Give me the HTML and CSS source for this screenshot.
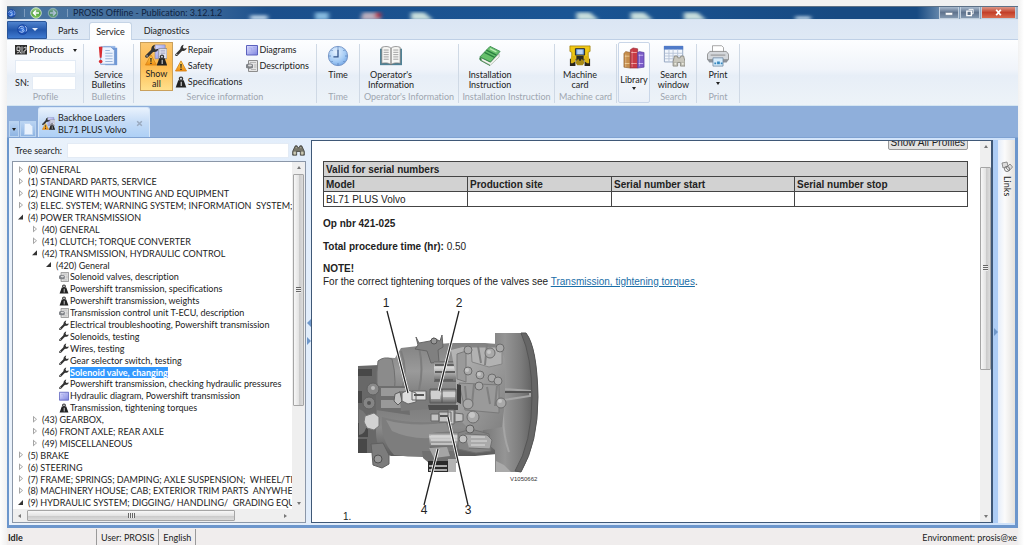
FILE: index.html
```html
<!DOCTYPE html>
<html lang="en">
<head>
<meta charset="utf-8">
<title>PROSIS Offline - Publication: 3.12.1.2</title>
<link rel="stylesheet" href="styles.css">
</head>
<body>
<svg class="defs" aria-hidden="true">
  <defs>
    <linearGradient id="gold" x1="0" y1="0" x2="0" y2="1"><stop offset="0" stop-color="#ffe35a"/><stop offset="1" stop-color="#f08a10"/></linearGradient>
    <linearGradient id="lilac" x1="0" y1="0" x2="1" y2="1"><stop offset="0" stop-color="#dfe0ff"/><stop offset="1" stop-color="#7d84e0"/></linearGradient>
    <linearGradient id="greenball" x1="0" y1="0" x2="0" y2="1"><stop offset="0" stop-color="#b5dca0"/><stop offset=".5" stop-color="#4d9c3c"/><stop offset="1" stop-color="#85cf5c"/></linearGradient>
    <radialGradient id="clockface" cx=".4" cy=".3" r=".8"><stop offset="0" stop-color="#e6f2ff"/><stop offset=".6" stop-color="#a4cbf5"/><stop offset="1" stop-color="#6ba0e2"/></radialGradient>
    <radialGradient id="orb"><stop offset="0" stop-color="#3e82ea"/><stop offset="1" stop-color="#123f9e"/></radialGradient>
  </defs>
  <symbol id="wrench" viewBox="0 0 12 12"><path d="M1.5 10.8 6.8 5.4" stroke="#333" stroke-width="2.6" stroke-linecap="round"/><path d="M6 6.6C4.7 4 6 1.2 8.7.7L7.8 3.2l1.2 1.5 2.7-.6C11.5 6.400 8.800 7.800 6 6.600Z" fill="#333"/><circle cx="1.8" cy="10.4" r=".6" fill="#eee"/></symbol>
  <symbol id="weight" viewBox="0 0 12 12"><path d="M3.300 4.300h5.400l2.600 7.200H.7Z" fill="#222"/><circle cx="6" cy="2.700" r="1.600" fill="none" stroke="#333" stroke-width="1.300"/><path d="M5.700 5.700h1v4.400h-1z" fill="#e8e8e8"/></symbol>
  <symbol id="warn" viewBox="0 0 12 12"><path d="M6 .9 11.500 11H.5Z" fill="url(#gold)" stroke="#d8871c" stroke-width=".9" stroke-linejoin="round"/><path d="M5.300 4h1.400L6.400 8h-.8zM5.300 8.800h1.400v1.300H5.300z" fill="#222"/></symbol>
  <symbol id="diagram" viewBox="0 0 12 12"><path d="M.5 1.500h11v9.500H.5z" fill="url(#lilac)" stroke="#5b61bd"/><path d="M2.500 4h3v3h4M7 3.500h2.500M3 9h3" stroke="#a5a9ea" stroke-width=".8" fill="none"/></symbol>
  <symbol id="descr" viewBox="0 0 12 12"><path d="M2.500.5h9v11h-9z" fill="#e4e4e4" stroke="#8d8d8d"/><path d="M4 2.500h6M8 5h2.500M8 7h2.500M5 9.500h5" stroke="#aaa" stroke-width=".8"/><path d="M0 5c0-1 2-1.500 3.500-1.500S7 4 7 5v2.500C7 9 0 9 0 7.500Z" fill="#808388"/><ellipse cx="4" cy="5.500" rx="2" ry="1" fill="#dcdcdc"/></symbol>
  <symbol id="binoc" viewBox="0 0 14 12"><path d="M3.500 1h2l.8 2h1.400l.8-2h2l2.800 6v4H9V7H5v4H.7V7Z" fill="#77766a" stroke="#35352f" stroke-width=".8"/><path d="M2 7.500h2V10H2zm8 0h2V10h-2zM4 3h1.500M8.500 3H10" fill="#c7c3ac" stroke="#d8d5c2" stroke-width=".6"/></symbol>
  <symbol id="gear-orb" viewBox="0 0 12 12"><circle cx="6" cy="6" r="5.700" fill="url(#orb)"/><path d="M2 5a3 3 0 0 1 5.500-1.200M2.500 7.500A3 3 0 0 0 8 7M8.500 2.200a4 4 0 0 1 1.300 6M4 5.500a1.500 1.500 0 1 1 1.300 2" fill="none" stroke="#c3d9ff" stroke-width=".9"/></symbol>
  <symbol id="showall" viewBox="0 0 24 24"><path d="M11 1h11v15H11z" fill="url(#lilac)" stroke="#7d82b0" stroke-width=".7"/><path d="M15 5h9v11h-9z" fill="#dfe1ee" stroke="#777" stroke-width=".7"/><path d="M17 7.500h5M17 10h5" stroke="#9a9aba"/><use href="#wrench" x="0" y="0" width="15" height="15"/><use href="#warn" x="0" y="11" width="13" height="13"/><use href="#weight" x="12" y="11" width="13" height="13"/></symbol>
</svg>

<header class="titlebar">
  <svg class="title-orb" viewBox="0 0 12 12"><use href="#gear-orb"/></svg>
  <span class="title-sep"></span>
  <svg class="nav-ball" viewBox="0 0 14 14"><circle cx="7" cy="7" r="6.200" fill="url(#greenball)" stroke="#d6e6d2"/><path d="M10.500 7H4.500M7 4 4 7l3 3" stroke="#fff" stroke-width="1.800" fill="none"/></svg>
  <svg class="nav-ball dim" viewBox="0 0 14 14"><circle cx="7" cy="7" r="5.500" fill="url(#greenball)" stroke="#d6e6d2"/><path d="M3.500 7h6M7 4l3 3-3 3" stroke="#fff" stroke-width="1.800" fill="none"/></svg>
  <span class="title-sep"></span>
  <span class="title-text">PROSIS Offline - Publication: 3.12.1.2</span>
  <svg class="glow" viewBox="0 0 730 13" preserveAspectRatio="none" aria-hidden="true">
    <defs><filter id="soft"><feGaussianBlur stdDeviation="2"/></filter></defs>
    <g filter="url(#soft)">
      <path d="M24 9h18v5H24zM587 10h16v4h-16z" fill="#b5cde2"/><path d="M91 6h14v8H91z" fill="#85b9de"/><path d="M140 6h17l2 8h-21z" fill="#b9aebd"/><path d="M153 6h6v6h-6z" fill="#b2354a"/>
      <path d="M190 6h14l9 8h-23zM361 6h14l9 8h-23zM417 6h14l9 8h-23zM472 6h14l9 8h-23z" fill="#c6dddc"/>
    </g>
  </svg>
  <div class="winbtns">
    <button class="wb" aria-label="Minimize"><svg viewBox="0 0 20 12"><path d="M6 6h8v3H6z" fill="#fff" stroke="#5a6b80" stroke-width=".5"/></svg></button>
    <button class="wb" aria-label="Restore"><svg viewBox="0 0 20 12"><path d="M8.500 2.500h5v5h-2" fill="none" stroke="#fff" stroke-width="1"/><path d="M6.500 4.500h5v5h-5z" fill="#5b6f86" stroke="#fff" stroke-width="1.500"/></svg></button>
    <button class="wb close" aria-label="Close"><svg viewBox="0 0 34 12"><path d="m14.500 3 5 6m0-6-5 6" stroke="#fff" stroke-width="2"/></svg></button>
  </div>
</header>

<nav class="tabs">
  <button class="app-btn" aria-label="Application menu"><svg class="app-orb" viewBox="0 0 12 12"><use href="#gear-orb"/></svg><span class="caret light"></span></button>
  <button class="rtab parts">Parts</button>
  <button class="rtab active">Service</button>
  <button class="rtab diag">Diagnostics</button>
</nav>

<section class="ribbon">
  <div class="group g-profile">
    <div class="body col">
      <button class="small-btn products"><svg class="ic12" viewBox="0 0 12 12"><path d="M0 1h12v9.500H0z" fill="#2d2d2d"/><path d="M2 3h3v3.500H2zm0 6 3-1.500 1 2M7 2.500v7M8.500 4 11 3v3l-2 1v2.500" fill="none" stroke="#ddd" stroke-width=".9"/></svg>Products<span class="caret"></span></button>
      <input class="field" aria-label="Product">
      <div class="sn"><label for="sn">SN:</label><input id="sn" class="field"></div>
    </div>
    <div class="caption">Profile</div>
  </div>
  <div class="group g-bulletins">
    <div class="body">
      <button class="big-btn"><svg class="ic" viewBox="0 0 24 24"><path d="M7 1h13v19H7z" fill="#9dbbe8"/><path d="M9 3h13v19H9z" fill="#6f98d6"/><path d="M4 2h11l4 4v15H4z" fill="#edf4ff" stroke="#7a9dd0"/><path d="M9 6h5M9 9h8M9 12h8M9 15h8M9 18h8" stroke="#93afd5"/><path d="M2 2h4L5 14H3z" fill="#d92c31"/><circle cx="4" cy="18" r="2" fill="#d92c31"/></svg>Service<br>Bulletins</button>
    </div>
    <div class="caption">Bulletins</div>
  </div>
  <div class="group g-info">
    <div class="body info">
      <button class="big-btn pressed"><svg class="ic" viewBox="0 0 24 24"><use href="#showall"/></svg>Show<br>all</button>
      <div class="stack">
        <button class="small-btn"><svg class="ic12"><use href="#wrench"/></svg>Repair</button>
        <button class="small-btn"><svg class="ic12"><use href="#warn"/></svg>Safety</button>
        <button class="small-btn"><svg class="ic12"><use href="#weight"/></svg>Specifications</button>
      </div>
      <div class="stack">
        <button class="small-btn"><svg class="ic12"><use href="#diagram"/></svg>Diagrams</button>
        <button class="small-btn"><svg class="ic12"><use href="#descr"/></svg>Descriptions</button>
      </div>
    </div>
    <div class="caption">Service information</div>
  </div>
  <div class="group g-time">
    <div class="body">
      <button class="big-btn"><svg class="ic" viewBox="0 0 24 24"><circle cx="12" cy="12" r="10.500" fill="url(#clockface)" stroke="#6d8fc4"/><path d="M12 5v8H7" fill="none" stroke="#33558c" stroke-width="1.400"/><path d="M12 2.500v1.500M12 20v1.500M2.500 12H4M20 12h1.500M5 5.500l1 1M18 17.500l1 1M5 18.500l1-1M18 6.500l1-1" stroke="#4d74ad"/></svg>Time</button>
    </div>
    <div class="caption">Time</div>
  </div>
  <div class="group g-operator">
    <div class="body start">
      <button class="big-btn"><svg class="ic" viewBox="0 0 24 24"><path d="M0 4h24v18H0z" fill="#4f8296"/><path d="M2 2.500C6 1 10 1.500 12 3.500c2-2 6-2.500 10-1V20c-4-1-8-.5-10 1.500C10 19.500 6 19 2 20Z" fill="#f6f6f4" stroke="#777" stroke-width=".8"/><path d="M12 3.500v18" stroke="#555"/><path d="M4 5.500h5.500M4 8h5.500M4 10.500h5.500M4 13h5.500M4 15.500h5.500M14.500 5.500H20M14.500 8H20M14.500 10.500H20M14.500 13H20M14.500 15.500H20" stroke="#9a9a9a"/></svg>Operator's<br>Information</button>
    </div>
    <div class="caption">Operator's Information</div>
  </div>
  <div class="group g-install">
    <div class="body start">
      <button class="big-btn"><svg class="ic" viewBox="0 0 24 24"><path d="m1 13 11 5v5L2 17.500C0 16 0 14.500 1 13Z" fill="#2e7d3e"/><path d="m2.500 14 10 5L22 9.500v3.500l-9.500 9L3 17Z" fill="#f3f5ef" stroke="#8a9a88" stroke-width=".6"/><path d="M1 13 12 1.500 23 7l-10.500 11.500Z" fill="#67c06c" stroke="#36894a"/><path d="m8 5.500 11 5.500M6 8l11 5.500" stroke="#2b7f40" stroke-width="1.600"/><path d="M12 4l7 3.500" stroke="#b9ecb5" stroke-width="1.500"/></svg>Installation<br>Instruction</button>
    </div>
    <div class="caption">Installation Instruction</div>
  </div>
  <div class="group g-machine">
    <div class="body start">
      <button class="big-btn"><svg class="ic" viewBox="0 0 24 24"><path d="M1 1h22v6l-2 1v8H3V8L1 7Z" fill="#efc714" stroke="#9b7b0a" stroke-width=".8"/><path d="M7 4h10v7H7z" fill="#5f8fd0" stroke="#222"/><path d="M9 5h6v5H9z" fill="#b9d4f5"/><path d="M8 12h8v6H8z" fill="#2a2a22"/><path d="M1 15h6v8H1zm16 0h6v8h-6z" fill="#28251c"/><path d="M3 12h4v6l-3 2H2v-6zM17 12h4l1 2v6h-2l-3-2z" fill="#dcb414"/><path d="m7 19 3-4 2 3 2-3 3 4-2 3H9Z" fill="#a98c17"/></svg>Machine<br>card</button>
    </div>
    <div class="caption">Machine card</div>
  </div>
  <button class="big-btn library"><svg class="ic" viewBox="0 0 24 24"><path d="m1 7 2-2 5 1v17l-7-1Z" fill="#c68e4c" stroke="#885522" stroke-width=".6"/><path d="m8 3 3-2 5 1v21H8Z" fill="#c83a45" stroke="#861f2e" stroke-width=".6"/><path d="m16 6 2-1 5 1v16l-7 1Z" fill="#7c5cc8" stroke="#4a3392" stroke-width=".6"/><path d="M2 10h5M2 18h5" stroke="#eecb94"/><path d="M9 6h6M9 18h6" stroke="#f1a6a3"/><path d="M17 9h5M17 18h5" stroke="#cbbcf4"/><path d="M3 8v14M10 4v18M18 8v13" stroke="#fff" opacity=".3"/></svg>Library<span class="caret"></span></button>
  <div class="group g-search">
    <div class="body">
      <button class="big-btn"><svg class="ic" viewBox="0 0 24 24"><path d="M1.500 1.500h20v17h-20z" fill="#f2f6fc" stroke="#8ea1bd"/><path d="M1 1h21v4H1z" fill="#4f7ac8"/><path d="M2 9h19M2 12h19M2 15h19M6.500 5v13M11 5v13M16 5v13" stroke="#b7c4d8"/><path d="M12.500 12h3l.7 2h2.600l.7-2h3l1.500 6v5h-5v-4h-3v4h-5v-5Z" fill="#c9c7bd" stroke="#85847c" stroke-width=".9"/><path d="M12 19h3v3h-3zm8 0h3v3h-3z" fill="#eceadf" stroke="#a09f94" stroke-width=".6"/></svg>Search<br>window</button>
    </div>
    <div class="caption">Search</div>
  </div>
  <div class="group g-print">
    <div class="body">
      <button class="big-btn"><svg class="ic" viewBox="0 0 24 24"><path d="M6 .8h10l2 2V9H6z" fill="#fff" stroke="#888" stroke-width=".8"/><path d="M3 7h18l2.500 3v6H.5v-6Z" fill="#d4d7db" stroke="#777" stroke-width=".8"/><path d="M4 11h16" stroke="#888"/><path d="M.5 16h23l-2 3h-19Z" fill="#8d9299"/><path d="M6.500 14h11v9h-11z" fill="#d7ecfb" stroke="#66809a" stroke-width=".8"/><path d="M8 19h2v2H8zm3-1h3v3h-3zm4 1h2v2h-2z" fill="#3888bf"/></svg>Print<span class="caret"></span></button>
    </div>
    <div class="caption">Print</div>
  </div>
</section>

<div class="docbar">
  <button class="mini" aria-label="Tab list"><span class="caret"></span></button>
  <button class="mini wide" aria-label="New tab"><svg viewBox="0 0 14 14"><path d="M3.500 1.500h5l3 3v8h-8z" fill="#e9f2fd" stroke="#c3d8f2"/></svg></button>
  <div class="doctab">
    <svg class="tab-ic" viewBox="0 0 24 24"><use href="#showall"/></svg>
    <span class="tab-name">Backhoe Loaders<br>BL71 PLUS Volvo</span>
    <button class="tab-close" aria-label="Close tab"><svg viewBox="0 0 6 6"><path d="m1 1 4 4m0-4L1 5" stroke="#9aaabf" stroke-width="1.300"/></svg></button>
  </div>
</div>

<main class="work">
  <aside class="side">
    <div class="searchrow"><label for="ts">Tree search:</label><input id="ts" class="field"><button class="find" aria-label="Find"><svg viewBox="0 0 14 12"><use href="#binoc"/></svg></button></div>
    <div class="treebox">
      <ul class="tree">
        <li><button class="tw" aria-label="Expand"></button>(0) GENERAL</li>
        <li><button class="tw" aria-label="Expand"></button>(1) STANDARD PARTS, SERVICE</li>
        <li><button class="tw" aria-label="Expand"></button>(2) ENGINE WITH MOUNTING AND EQUIPMENT</li>
        <li><button class="tw" aria-label="Expand"></button>(3) ELEC. SYSTEM; WARNING SYSTEM; INFORMATION&nbsp; SYSTEM; INSTRUMENTS</li>
        <li><button class="tw open" aria-label="Collapse"></button>(4) POWER TRANSMISSION</li>
        <li class="l1"><button class="tw" aria-label="Expand"></button>(40) GENERAL</li>
        <li class="l1"><button class="tw" aria-label="Expand"></button>(41) CLUTCH; TORQUE CONVERTER</li>
        <li class="l1"><button class="tw open" aria-label="Collapse"></button>(42) TRANSMISSION, HYDRAULIC CONTROL</li>
        <li class="l2"><button class="tw open" aria-label="Collapse"></button>(420) General</li>
        <li class="l3"><svg><use href="#descr"/></svg><a href="#">Solenoid valves, description</a></li>
        <li class="l3"><svg><use href="#weight"/></svg><a href="#">Powershift transmission, specifications</a></li>
        <li class="l3"><svg><use href="#weight"/></svg><a href="#">Powershift transmission, weights</a></li>
        <li class="l3"><svg><use href="#descr"/></svg><a href="#">Transmission control unit T-ECU, description</a></li>
        <li class="l3"><svg><use href="#wrench"/></svg><a href="#">Electrical troubleshooting, Powershift transmission</a></li>
        <li class="l3"><svg><use href="#wrench"/></svg><a href="#">Solenoids, testing</a></li>
        <li class="l3"><svg><use href="#wrench"/></svg><a href="#">Wires, testing</a></li>
        <li class="l3"><svg><use href="#wrench"/></svg><a href="#">Gear selector switch, testing</a></li>
        <li class="l3"><svg><use href="#wrench"/></svg><a href="#" class="sel">Solenoid valve, changing</a></li>
        <li class="l3"><svg><use href="#wrench"/></svg><a href="#">Powershift transmission, checking hydraulic pressures</a></li>
        <li class="l3"><svg><use href="#diagram"/></svg><a href="#">Hydraulic diagram, Powershift transmission</a></li>
        <li class="l3"><svg><use href="#weight"/></svg><a href="#">Transmission, tightening torques</a></li>
        <li class="l1"><button class="tw" aria-label="Expand"></button>(43) GEARBOX,</li>
        <li class="l1"><button class="tw" aria-label="Expand"></button>(46) FRONT AXLE; REAR AXLE</li>
        <li class="l1"><button class="tw" aria-label="Expand"></button>(49) MISCELLANEOUS</li>
        <li><button class="tw" aria-label="Expand"></button>(5) BRAKE</li>
        <li><button class="tw" aria-label="Expand"></button>(6) STEERING</li>
        <li><button class="tw" aria-label="Expand"></button>(7) FRAME; SPRINGS; DAMPING; AXLE SUSPENSION;&nbsp; WHEEL/TRACK UNIT</li>
        <li><button class="tw" aria-label="Expand"></button>(8) MACHINERY HOUSE; CAB; EXTERIOR TRIM PARTS&nbsp; ANYWHERE</li>
        <li><button class="tw open" aria-label="Collapse"></button>(9) HYDRAULIC SYSTEM; DIGGING/ HANDLING/&nbsp; GRADING EQUIPMENT</li>
      </ul>
      <div class="vscroll"><i class="up"></i><div class="thumb"><b></b></div><span class="rest"></span><i class="down"></i></div>
      <div class="hscroll"><i class="left"></i><div class="thumb"><b></b></div><span class="rest"></span><i class="right"></i></div>
      <div class="corner"></div>
    </div>
  </aside>
  <div class="split"><i class="left"></i><i class="right"></i></div>
  <article class="doc">
    <div class="page">
      <div class="profiles"><button>Show All Profiles</button></div>
      <table>
        <colgroup><col class="c1"><col class="c1"><col class="c3"><col></colgroup>
        <thead>
          <tr><th colspan="4">Valid for serial numbers</th></tr>
          <tr><th>Model</th><th>Production site</th><th>Serial number start</th><th>Serial number stop</th></tr>
        </thead>
        <tbody><tr><td>BL71 PLUS Volvo</td><td></td><td></td><td></td></tr></tbody>
      </table>
      <p><strong>Op nbr 421-025</strong></p>
      <p><strong>Total procedure time (hr):</strong> 0.50</p>
      <p class="note"><strong>NOTE!</strong><br>For the correct tightening torques of the valves see <a href="#">Transmission, tightening torques</a>.</p>
      <div class="step"><span class="num">1.</span>
      <svg class="photo" viewBox="5 0 195 232" role="img" aria-label="Transmission with solenoid valves 1 to 4">
        <defs>
          <linearGradient id="cyl" x1="0" y1="0" x2="0" y2="1"><stop offset="0" stop-color="#828282"/><stop offset=".25" stop-color="#9a9a9a"/><stop offset=".5" stop-color="#7a7a7a"/><stop offset=".75" stop-color="#8a8a8a"/><stop offset="1" stop-color="#5c5c5c"/></linearGradient>
          <linearGradient id="bell" x1="0" y1="0" x2="1" y2="0"><stop offset="0" stop-color="#777"/><stop offset=".4" stop-color="#959595"/><stop offset=".7" stop-color="#7b7b7b"/><stop offset="1" stop-color="#555"/></linearGradient>
          <linearGradient id="steel" x1="0" y1="0" x2="0" y2="1"><stop offset="0" stop-color="#6a6a6a"/><stop offset=".3" stop-color="#d8d8d8"/><stop offset="1" stop-color="#636363"/></linearGradient>
          <linearGradient id="block" x1="0" y1="0" x2="1" y2="1"><stop offset="0" stop-color="#b8b8b8"/><stop offset="1" stop-color="#808080"/></linearGradient>
        </defs>
        <g transform="translate(6 8)">
          <path d="M7 67 28 66 28 154 7 154Z" fill="#686868"/>
          <path d="M7 70h14v7H7zM7 92h4v12H7zM7 124h10v14H7zM7 140h9v14H7z" fill="#484848"/><path d="M8 110q9 3 8 14t-8 12" fill="#777"/>
          <path d="M27 62q5-4 17-3l6-10 26-3 24-2h34l12 1v110l-22 2H40q-15-4-15-24Z" fill="url(#cyl)"/>
          <path d="M27 62q6-5 14-2 6 22 0 46l-12-2q-5-20-2-42Z" fill="#8b8b8b" stroke="#707070"/>
          <path d="M50 52q7 20 1 40M68 48q5 22 0 43" fill="none" stroke="#7d7d7d" stroke-width="2"/>
          <path d="M67 46l-2-8 3 6 11-2 3-3 7 3 2-6 1 12-5 3 1 12-8 1-4-12-12-2Z" fill="#808080" stroke="#666"/><circle cx="83" cy="42" r="3" fill="#989898" stroke="#555"/>
          <path d="M144 34h31q11 14 12 62 0 46-17 77h-26v-22l-12-10V55l12-8Z" fill="url(#bell)"/>
          <path d="M170 34h5q11 14 12 64 0 46-17 75l-6-1q17-28 17-74 0-40-11-64Z" fill="#666" stroke="#555"/>
          <path d="M150 52q-4 18 3 38l26 2v5l-26 4q-3 30 5 52" fill="none" stroke="#a5a5a5" stroke-width="2"/>
          <path d="M153 93h27" stroke="#525252" stroke-width="2"/><path d="M145 162l8 4 7 7h-15z" fill="#aaa"/>
          <path d="M31 118q28 8 66 4l8 34q-36 4-62 0-14-15-12-38Z" fill="#7d7d7d"/><path d="M35 121q24 7 60 3l5 12q-34 8-59-4Z" fill="#9b9b9b" opacity=".6"/>
          <path d="M25 87h31l3 29-34-5Z" fill="#6e6e6e"/><path d="M30 89h25v8H30zM30 101h28v8H30z" fill="#999"/>
          <circle cx="22" cy="90" r="6" fill="#888" stroke="#606060"/><circle cx="18" cy="104" r="6" fill="#858585" stroke="#606060"/><circle cx="22" cy="89" r="2" fill="#bbb"/><circle cx="18" cy="104" r="2" fill="#555"/>
          <path d="M14 117l9-3 5 4v9l-5 4-7-2-3-6Z" fill="#d2d2d2" stroke="#777"/>
          <path d="M20 145l12-1 6 12v9l-7 4-9-3-1-12Z" fill="#7c7c7c" stroke="#606060"/><circle cx="27" cy="160" r="4" fill="#999" stroke="#505050"/>
          <path d="M83 62h22v21H83z" fill="url(#steel)"/><path d="M84 66h20M84 73h20M84 81h18" stroke="#606060" stroke-width="2"/>
          <path d="M100 51l12-3 38 2 4 10v43l-3 25-30 5-16-16V78Z" fill="url(#block)"/>
          <path d="M106 55l9-3v31l-9-3zM108 84l40 2v28l-34-3Z" fill="#9a9a9a" stroke="#7a7a7a"/>
          <path d="M120 48h31v17l-13 3-17-5Z" fill="#b2b2b2" stroke="#858585"/>
          <path d="M127 47l3 17M136 45l-2 21M114 87l2 19M123 85l-2 20M136 88l3 17M146 87l-2 20" stroke="#808080" stroke-width="2"/>
          <g fill="#a9a9a9" stroke="#6c6c6c"><circle cx="117" cy="51" r="4"/><circle cx="139" cy="54" r="5"/><circle cx="149" cy="49" r="4"/><circle cx="117" cy="72" r="4"/><circle cx="129" cy="76" r="4"/><circle cx="141" cy="79" r="4"/><circle cx="147" cy="82" r="4"/><circle cx="128" cy="87" r="4"/><circle cx="117" cy="105" r="5"/><circle cx="150" cy="104" r="5"/><circle cx="122" cy="118" r="6"/></g>
          <g fill="#c6c6c6"><circle cx="138" cy="53" r="2"/><circle cx="116" cy="71" r="2"/><circle cx="128" cy="75" r="2"/><circle cx="121" cy="116" r="3"/><circle cx="149" cy="102" r="2"/></g>
          <path d="M48 92h28l2 18-28 2Z" fill="#7b7b7b"/><path d="M44 95l5-2 2 9-4 4-4-4Z" fill="#c1c1c1" stroke="#5d5d5d"/><path d="M51 94l6-3 8 3v9l-8 2-6-3ZM61 92h14v9H61z" fill="#ddd" stroke="#666"/><path d="M63 96h10" stroke="#555" stroke-width="2"/>
          <path d="M79 90h26v14H79z" fill="url(#steel)" stroke="#5c5c5c"/><path d="M80 92h9v8h-9zM92 93h12v5H92z" fill="#d0d0d0"/><path d="M91 90v14" stroke="#555"/>
          <path d="M77 106h30v5H78z" fill="#4e4e4e"/><path d="M106 85l4 1v19l-4-2z" fill="#3d3d3d"/>
          <path d="M80 115h8v7h-8zM88 113h12v10H88zM97 111h6v14h-6zM104 114l8 1v7l-8 1z" fill="#c2c2c2" stroke="#666"/><path d="M89 117h8" stroke="#555" stroke-width="2"/>
          <path d="M78 135q8-3 29-2l3 14-31 2Z" fill="url(#steel)"/><path d="M80 137h28M80 141h28M80 145h25" stroke="#d4d4d4" stroke-width="1.500"/>
          <path d="M107 134l13-4 18 5 2 17-15 2-18-4Z" fill="#858585" stroke="#707070"/><path d="M114 135l22 1 5 5-2 9-21-1" fill="#aaa" stroke="#707070"/><circle cx="112" cy="140" r="4" fill="#c2c2c2" stroke="#666"/><circle cx="119" cy="130" r="4" fill="#aaa" stroke="#5e5e5e"/><path d="M120 138h14M120 142h16M120 146h14" stroke="#ddd"/>
          <path d="M71 152h35v12H78l-6-5Z" fill="#707070"/><path d="M77 162h20v11H77z" fill="#292929"/><path d="M78 167h18M78 171h18" stroke="#d2d2d2" stroke-width="1.500"/><path d="M97 160h8v13h-8z" fill="#b3b3b3"/><path d="M78 149l18-1 3 9-16 2Z" fill="#a5a5a5"/>
          <g stroke="#fff" stroke-width="3"><path d="M36 12 57 94M108 12 88 92M117 206 97 118M73 206 87 150"/></g>
          <g stroke="#222" stroke-width="1.300"><path d="M36 12 57 94M108 12 88 92M117 206 97 118M73 206 87 150"/></g>
        </g>
        <g class="callout"><text x="41" y="16">1</text><text x="114" y="16">2</text><text x="123" y="223">3</text><text x="79" y="223">4</text></g>
        <text class="fig" x="165" y="190">V1050662</text>
      </svg></div>
    </div>
    <div class="vscroll docscroll"><i class="up"></i><span class="gap"></span><div class="thumb"><b></b></div><span class="rest"></span><i class="down"></i></div>
  </article>
  <div class="split right-split"><i class="right"></i></div>
  <button class="links"><svg viewBox="0 0 12 12"><path d="M1 2l5-1 1 4-5 2Zm4 5 4-4 2.500 3L8 10Z" fill="#ddd" stroke="#777" stroke-width=".8"/><circle cx="6" cy="8" r="2.500" fill="none" stroke="#777"/></svg><span>Links</span></button>
</main>

<footer class="status">
  <strong>Idle</strong><span class="cell user">User: PROSIS</span><span class="cell">English</span><span class="env">Environment: prosis@xe</span>
</footer>
</body>
</html>
```

FILE: styles.css
```css
* { box-sizing: border-box; }
html, body { height: 100%; }
body {
  margin: 0;
  padding: 6px 6px 0 7px;
  display: flex;
  flex-direction: column;
  background: linear-gradient(90deg, #fdfdfd, #f1f1f1 7px, #f1f1f1 calc(100% - 6px), #fff);
  font: 9px/12px Lato, "Noto Sans", sans-serif;
  font-variant-ligatures: none;
  color: #222;
  overflow: hidden;
}
button, input { font: inherit; font-variant-ligatures: none; color: inherit; border: 0; padding: 0; margin: 0; background: none; min-width: 0; }
svg { display: block; flex: none; }
.defs { position: absolute; width: 0; height: 0; }
.field { background: #fff; border: 1px solid #e3ebf5; }
.caret { border: 2px solid transparent; border-top: 3px solid #222; border-bottom: 0; flex: none; }
.caret.light { border-width: 3px 3px 0; border-top-color: #e4edfb; }

/* title bar */
.titlebar {
  flex: none; height: 14px; display: flex; align-items: center; gap: 5px;
  background: linear-gradient(90deg, #3b608c, #48739f 20px, #416d9c 180px, #1b4f8b 260px, #1a5594 560px, #174a82 830px, #174a82 90%, #7e9bb9 93%, #9db3ca);
  border-top: 1px solid #5d7187; border-bottom: 1px solid #d5e2f0;
}
.title-orb { width: 9px; height: 11px; }
.title-sep { width: 1px; height: 8px; background: #7d9cbd; margin-left: 3px; }
.nav-ball { width: 12px; height: 12px; }
.nav-ball.dim { opacity: .55; }
.title-text { white-space: nowrap; color: #10233f; }
.glow { flex: 1; min-width: 0; height: 12px; }
.winbtns { display: flex; align-self: stretch; gap: 1px; padding-right: 2px; }
.wb { width: 20px; background: linear-gradient(#a9bace, #60748e 50%, #8197af); border: 1px solid #c0cedc; border-top: 0; }
.wb.close { width: 35px; background: linear-gradient(#dc9685, #c3402a 50%, #d96a4d); }
.wb svg { width: 100%; height: 11px; }

/* ribbon tabs */
.tabs { flex: none; height: 20px; display: flex; align-items: flex-end; background: linear-gradient(#dbe6f4, #dfe9f5); border-bottom: 1px solid #bfd0e6; }
.app-btn { width: 40px; height: 18px; align-self: center; display: flex; align-items: center; justify-content: center; gap: 4px; background: linear-gradient(#4f83ce, #2457ab 50%, #3f7ad0); border: 1px solid #2a569a; border-radius: 0 2px 0 0; }
.app-orb { width: 11px; height: 11px; }
.rtab { height: 15px; margin-bottom: 1px; }
.rtab.parts { width: 42px; }
.rtab.active { width: 43px; height: 18px; margin-bottom: -1px; background: #fdfeff; border: 1px solid #c5d4e6; border-bottom: 0; border-radius: 3px 3px 0 0; }
.rtab.diag { width: 69px; }

/* ribbon */
.ribbon { flex: none; height: 66px; display: flex; padding: 2px 0 2px 2px; background: linear-gradient(#fdfeff, #f0f4fa 45%, #e7eef7 55%, #edf3f8); border-bottom: 1px solid #d5e6f2; }
.group { display: flex; flex-direction: column; flex: none; border-right: 1px solid #cfd9e5; margin-top: 2px; }
.group .body { flex: 1; display: flex; justify-content: center; min-height: 0; }
.group .body.start, .group .body.info { justify-content: flex-start; }
.group .caption { height: 12px; text-align: center; color: #9ea6b0; white-space: nowrap; }
.g-profile { width: 75px; padding: 0 7px 0 6px; }
.g-bulletins { width: 50px; }
.g-info { width: 183px; }
.g-time { width: 43px; }
.g-operator { width: 99px; }
.g-install { width: 96px; }
.g-machine { width: 62px; }
.g-search { width: 46px; }
.g-print { width: 43px; }
.group .body.col { flex-direction: column; justify-content: flex-start; gap: 2px; }
.body.col .field { width: 61px; height: 14px; flex: none; }
.body.col .small-btn { margin-bottom: 2px; }
.sn { display: flex; align-items: center; gap: 3px; }
.body.col .sn .field { flex: 1; width: 0; }
.big-btn { display: flex; flex-direction: column; align-items: center; line-height: 10px; padding: 1px 3px; white-space: nowrap; }
.big-btn .caret { margin-top: 2px; }
.ic { width: 22px; height: 22px; margin-bottom: 3px; }
.big-btn.pressed { width: 33px; height: 49px; margin-top: -2px; background: linear-gradient(#fbc872, #fdb84b 45%, #ffe08c); border: 1px solid #c9a05c; }
.body.info { padding-left: 6px; gap: 2px; }
.stack { display: flex; flex-direction: column; gap: 4px; width: 70px; }
.small-btn { display: flex; align-items: center; gap: 1px; height: 12px; white-space: nowrap; }
.small-btn .caret { margin-left: 7px; }
.small-btn.products { gap: 2px; }
.ic12 { width: 12px; height: 12px; }
.library { width: 32px; padding: 4px 0; margin: 0 1px; border: 1px solid #c9d6e8; border-radius: 2px; background: linear-gradient(#fff, #eaf0f8); }
.library .ic { margin-bottom: 6px; }
.g-operator .big-btn, .g-install .big-btn { width: 54px; margin-left: 4px; }
.g-machine .big-btn { width: 44px; margin-left: 3px; }

/* document tabs */
.docbar { flex: none; height: 32px; display: flex; align-items: flex-end; background: #8fafdb; border-bottom: 1px solid #7fa2d2; padding: 1px 0 0 2px; }
.mini { width: 10px; height: 16px; display: flex; align-items: center; justify-content: center; background: linear-gradient(#b9d3f2, #8fb5e3); border: 1px solid #b9d3f0; }
.mini.wide { width: 16px; margin: 0 2px 0 1px; }
.mini svg { width: 14px; height: 14px; }
.doctab { height: 30px; width: 112px; display: flex; align-items: center; padding: 2px 6px 0 3px; background: linear-gradient(#e9f2fd, #c4dbf6 50%, #aed0f6); border: 1px solid #d6e6f8; border-bottom: 0; border-radius: 3px 3px 0 0; }
.tab-ic { width: 13px; height: 13px; }
.tab-name { flex: 1; margin-left: 3px; white-space: nowrap; }
.tab-close svg { width: 7px; height: 7px; }

/* work area */
.work { flex: 1; min-height: 0; display: flex; background: linear-gradient(90deg, #eaf2fb, #cfe2fa); border: solid #6c96cc; border-width: 0 3px 3px 2px; padding: 2px 0 2px 3px; }
.side { flex: none; width: 294px; display: flex; flex-direction: column; gap: 3px; }
.searchrow { display: flex; align-items: center; height: 18px; padding: 3px 0 0 3px; gap: 5px; }
.searchrow label { width: 47px; white-space: nowrap; }
.searchrow .field { flex: 1; height: 15px; }
.find { width: 14px; height: 14px; margin-left: -2px; }
.find svg { width: 13px; height: 13px; }
.treebox { flex: 1; min-height: 0; display: grid; grid-template: minmax(0, 1fr) 13px / minmax(0, 1fr) 13px; background: #fff; border: 1px solid #8b97a8; }
.tree { list-style: none; margin: 0; padding: 2px 0 0 5px; display: flex; flex-direction: column; overflow: hidden; }
.tree li { flex: 1; min-height: 0; display: flex; align-items: center; white-space: nowrap; line-height: 11px; }
.tree .l1 { padding-left: 14px; }
.tree .l2 { padding-left: 28px; }
.tree .l3 { padding-left: 41px; }
.tree li svg { width: 10px; height: 10px; margin-right: 1px; }
.tree a { color: inherit; text-decoration: none; }
.tree a.sel { background: #3399ff; color: #fff; font-weight: bold; }
.tw { width: 10px; height: 8px; flex: none; background: #a5a5a5; clip-path: path(evenodd, "M1 0L5 3.500L1 7ZM2 2L2 5L4 3.500Z"); }
.tw.open { background: #333; clip-path: polygon(0 6px, 5px 1px, 5px 6px); }

/* scroll bars */
.vscroll, .hscroll { display: flex; align-items: center; background: #efefef; }
.vscroll { flex-direction: column; padding: 4px 0; }
.hscroll { padding: 0 5px; }
.vscroll i, .hscroll i, .split i { width: 0; height: 0; border: 2px solid transparent; flex: none; }
.vscroll i.up { border-bottom: 3px solid #777; border-top: 0; }
.vscroll i.down { border-top: 3px solid #777; border-bottom: 0; }
.hscroll i.left { border-right: 3px solid #777; border-left: 0; }
.hscroll i.right { border-left: 3px solid #777; border-right: 0; }
.thumb { display: flex; align-items: center; justify-content: center; border: 1px solid #a5a5a5; border-radius: 1px; }
.vscroll .thumb { width: 11px; flex: 236; margin-top: 5px; background: linear-gradient(90deg, #f7f7f7, #e4e4e4 50%, #c9c9c9 55%, #dcdcdc); }
.hscroll .thumb { height: 11px; flex: 207; margin-left: 6px; background: linear-gradient(#f7f7f7, #e4e4e4 50%, #c9c9c9 55%, #dcdcdc); }
.thumb b { width: 5px; height: 6px; background: repeating-linear-gradient(#666 0 1px, #eee 1px 2px); }
.hscroll .thumb b { width: 7px; height: 5px; background: repeating-linear-gradient(90deg, #666 0 1px, #eee 1px 2px); }
.vscroll .rest { flex: 98; }
.hscroll .rest { flex: 49; }
.corner { background: #efefef; }

.split { flex: none; width: 5px; display: flex; flex-direction: column; align-items: center; justify-content: center; gap: 10px; }
.split i { border-width: 4px; }
.split i.left { border-right: 4px solid #6f97c9; border-left: 0; }
.split i.right { border-left: 4px solid #6f97c9; border-right: 0; }
.right-split { background: #aecdf5; }

/* document */
.doc { flex: 1; min-width: 0; display: flex; background: #fff; border: 1px solid #3f5877; border-right-width: 2px; }
.page { flex: 1; min-width: 0; overflow: hidden; padding: 0 12px 0 11px; font: 10px/13px "Liberation Sans", Arial, sans-serif; }
.profiles { display: flex; justify-content: flex-end; margin: -6px 0 11px; }
.profiles button { height: 15px; padding: 0 2px; line-height: 12px; background: #e2e2e2; border: 1px solid #9a9a9a; border-radius: 2px; }
table { width: 100%; border-collapse: collapse; table-layout: fixed; border: 1px solid #888; }
th, td { height: 15px; padding: 1px 2px 0; text-align: left; line-height: 12px; border: 1px solid #444; }
th { background: #d2d2d2; }
.c1 { width: 144px; }
.c3 { width: 183px; }
.page p { margin: 10px 0 0; }
.page p.note { margin-top: 9px; }
.page p a { color: #1a6ea8; }
.step { display: flex; align-items: flex-end; margin-top: 3px; padding-left: 20px; }
.num { width: 7px; line-height: 12px; }
.photo { width: 195px; height: 232px; }
.callout { font-size: 12px; fill: #222; text-anchor: middle; }
.fig { font-size: 6px; fill: #333; }
.docscroll { width: 11px; }
.docscroll .gap { flex: 20; }
.docscroll .thumb { flex: 216; margin: 0; }
.docscroll .rest { flex: 155; }
.links { flex: none; width: 17px; display: flex; flex-direction: column; align-items: center; gap: 3px; padding-top: 21px; background: linear-gradient(90deg, #e6eefa, #fbfbfb 40%, #e3e1dd); }
.links svg { width: 12px; height: 12px; }
.links span { writing-mode: vertical-rl; }

/* status bar */
.status { flex: none; height: 17px; display: flex; align-items: stretch; line-height: 18px; background: #f0eded; padding: 1px 1px 0; }
.status strong { width: 88px; }
.cell { border-right: 1px solid #999; padding: 0 4px; line-height: 17px; }
.cell.user { border-left: 1px solid #999; }
.env { margin-left: auto; }
```
